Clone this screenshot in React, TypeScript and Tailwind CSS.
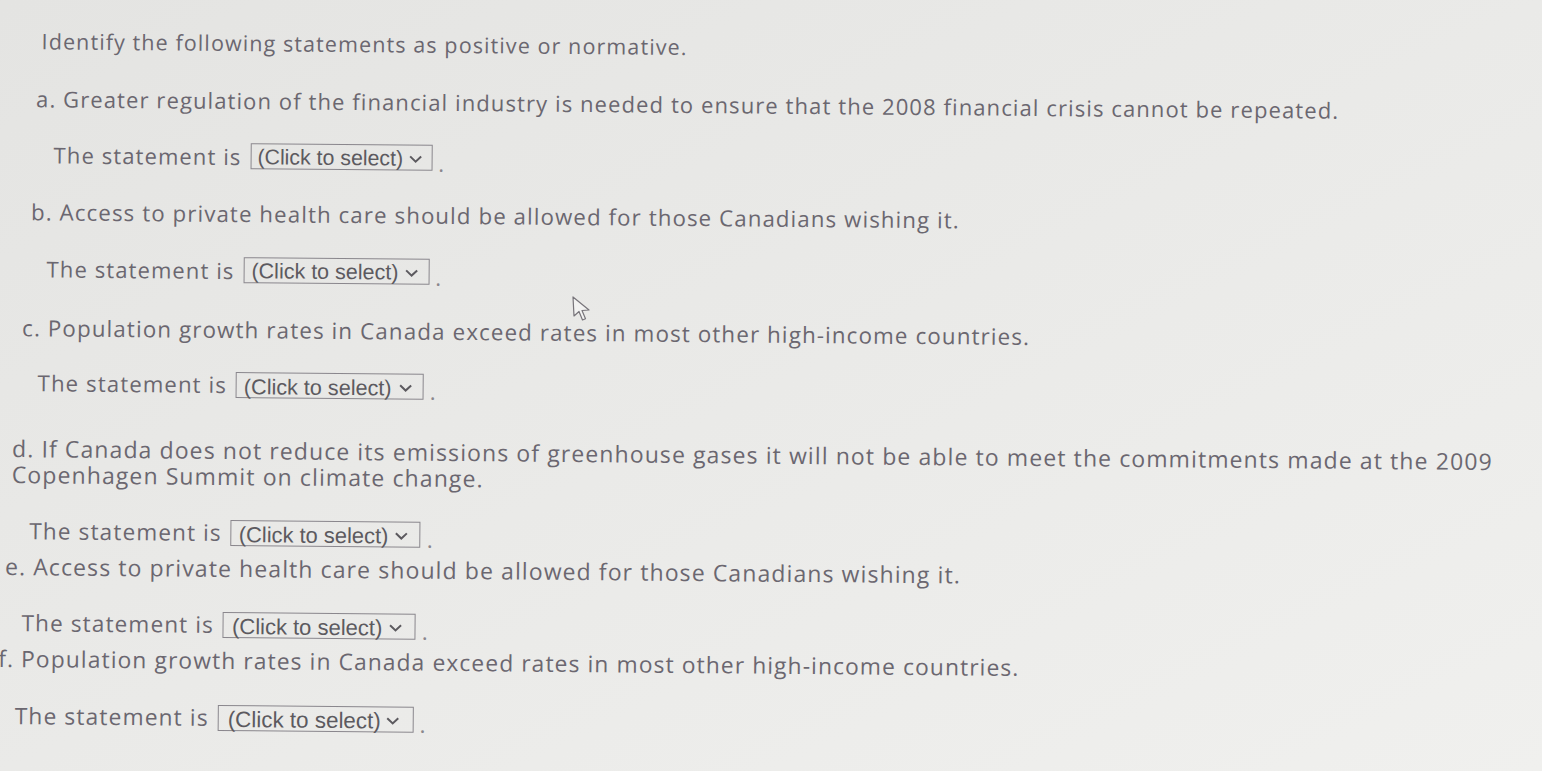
import React from "react";

function Select({ w, ss, pl, pr }: { w: string; ss: string; pl: string; pr: string }) {
  return (
    <span
      className={`inline-flex items-center h-[26px] ${w} ${pl} ${pr} border border-[#8a878d] font-['Liberation_Sans',Arial,sans-serif] ${ss} tracking-normal text-[#5c5a5f] leading-none`}
    >
      <span className="whitespace-nowrap pt-[4px]">(Click to select)</span>
      <span className="flex-1" />
      <svg width="14" height="9" viewBox="0 0 14 9" className="mt-[3px]">
        <path d="M1.5 1.8 L7 7 L12.5 1.8" fill="none" stroke="#5c5a5f" strokeWidth="2" />
      </svg>
    </span>
  );
}

function SelectRow({
  ml,
  mt,
  w,
  ts,
  ss,
  pl,
  pr,
}: {
  ml: string;
  mt: string;
  w: string;
  ts: string;
  ss: string;
  pl: string;
  pr: string;
}) {
  return (
    <div className={`flex items-center h-[26px] whitespace-nowrap ${ml} ${mt} ${ts}`}>
      <span>The statement is</span>
      <span className="ml-[9px] flex items-center">
        <Select w={w} ss={ss} pl={pl} pr={pr} />
      </span>
      <span className="ml-[6px] mt-[10px] text-[#8a878d]">.</span>
    </div>
  );
}

export default function App() {
  return (
    <div className="relative w-[1542px] h-[771px] overflow-hidden bg-gradient-to-br from-[#e4e4e2] via-[#eaeae8] to-[#f0f0ee] font-['Open_Sans',sans-serif] text-[#6b6770] tracking-[1.1px]">
      <div className="origin-top-left rotate-[0.5deg] pt-[28px]">
        <p className="ml-[42px] h-[26px] leading-[26px] whitespace-nowrap text-[21.5px]">
          Identify the following statements as positive or normative.
        </p>
        <p className="ml-[37px] mt-[31px] h-[26px] leading-[26px] whitespace-nowrap text-[22px]">
          a. Greater regulation of the financial industry is needed to ensure that the 2008 financial crisis cannot be repeated.
        </p>
        <SelectRow
          ml="ml-[55px]"
          mt="mt-[30px]"
          w="w-[182px]"
          ts="text-[22px]"
          ss="text-[21.3px]"
          pl="pl-[6px]"
          pr="pr-[9px]"
        />
        <p className="ml-[33px] mt-[32px] h-[26px] leading-[26px] whitespace-nowrap text-[22.25px]">
          b. Access to private health care should be allowed for those Canadians wishing it.
        </p>
        <SelectRow
          ml="ml-[49px]"
          mt="mt-[30px]"
          w="w-[186px]"
          ts="text-[22px]"
          ss="text-[21.5px]"
          pl="pl-[7px]"
          pr="pr-[10px]"
        />
        <p className="ml-[25px] mt-[34px] h-[26px] leading-[26px] whitespace-nowrap text-[22.4px]">
          c. Population growth rates in Canada exceed rates in most other high-income countries.
        </p>
        <SelectRow
          ml="ml-[41px]"
          mt="mt-[29px]"
          w="w-[188px]"
          ts="text-[22.2px]"
          ss="text-[21.6px]"
          pl="pl-[7px]"
          pr="pr-[10px]"
        />
        <p className="ml-[16px] mt-[39px] leading-[26px] whitespace-nowrap text-[23px]">
          d. If Canada does not reduce its emissions of greenhouse gases it will not be able to meet the commitments made at the 2009
          <br />
          Copenhagen Summit on climate change.
        </p>
        <SelectRow
          ml="ml-[34px]"
          mt="mt-[31px]"
          w="w-[190px]"
          ts="text-[22.6px]"
          ss="text-[21.9px]"
          pl="pl-[7px]"
          pr="pr-[11px]"
        />
        <p className="ml-[10px] mt-[9px] h-[26px] leading-[26px] whitespace-nowrap text-[23px]">
          e. Access to private health care should be allowed for those Canadians wishing it.
        </p>
        <SelectRow
          ml="ml-[27px]"
          mt="mt-[31px]"
          w="w-[193px]"
          ts="text-[22.6px]"
          ss="text-[22px]"
          pl="pl-[8px]"
          pr="pr-[12px]"
        />
        <p className="ml-[4px] mt-[10px] h-[26px] leading-[26px] whitespace-nowrap text-[22.8px]">
          f. Population growth rates in Canada exceed rates in most other high-income countries.
        </p>
        <SelectRow
          ml="ml-[21px]"
          mt="mt-[31px]"
          w="w-[196px]"
          ts="text-[22.8px]"
          ss="text-[22.4px]"
          pl="pl-[9px]"
          pr="pr-[13px]"
        />
      </div>
      <svg
        className="absolute left-[571px] top-[296px]"
        width="22"
        height="28"
        viewBox="0 0 22 28"
      >
        <path
          d="M2 1 L3 20 L8 15.5 L11.5 24 L14.5 22.8 L11 14.5 L18 14 Z"
          fill="#f2f2f1"
          stroke="#77747a"
          strokeWidth="1.2"
          strokeLinejoin="round"
        />
      </svg>
    </div>
  );
}
